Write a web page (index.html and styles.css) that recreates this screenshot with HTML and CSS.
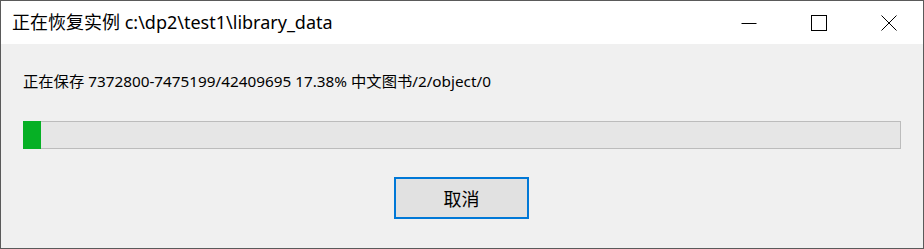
FILE: index.html
```html
<!DOCTYPE html>
<html lang="zh">
<head>
<meta charset="utf-8">
<link rel="stylesheet" href="styles.css">
</head>
<body>
<div class="window">
  <div class="titlebar">
    <div class="title">正在恢复实例 c:\dp2\test1\library_data</div>
    <div class="controls">
      <div class="ctl">
        <svg width="16" height="16" viewBox="0 0 16 16"><path d="M0.5 8.5H15.5" stroke="#000" stroke-width="1" fill="none"/></svg>
      </div>
      <div class="ctl">
        <svg width="16" height="16" viewBox="0 0 16 16"><rect x="0.5" y="0.5" width="15" height="15" stroke="#000" stroke-width="1" fill="none"/></svg>
      </div>
      <div class="ctl">
        <svg width="16" height="16" viewBox="0 0 16 16"><path d="M0.5 0.5L15.5 15.5M15.5 0.5L0.5 15.5" stroke="#000" stroke-width="1" fill="none"/></svg>
      </div>
    </div>
  </div>
  <div class="content">
    <div class="message">正在保存 7372800-7475199/42409695 17.38% 中文图书/2/object/0</div>
    <div class="progress"><div class="fill" style="width:18px"></div></div>
    <div class="actions"><button class="btn">取消</button></div>
  </div>
</div>
</body>
</html>
```
FILE: styles.css
```css
* { box-sizing: border-box; }
html, body { margin: 0; padding: 0; }
body {
  font-family: "Noto Sans", "Noto Sans CJK SC", sans-serif;
  background: #f0f0f0;
}
.window {
  width: 924px;
  height: 249px;
  border: 1px solid #5a5a5a;
  background: #f0f0f0;
  display: flex;
  flex-direction: column;
}
.titlebar {
  height: 43px;
  background: #fff;
  display: flex;
  align-items: center;
  justify-content: space-between;
}
.title {
  padding-left: 11px;
  font-size: 18px;
  color: #000;
  line-height: 1;
  margin-top: -2px;
}
.controls {
  display: flex;
  height: 100%;
  align-items: center;
  padding-right: 26px;
  gap: 54px;
}
.ctl {
  width: 16px;
  height: 16px;
  display: flex;
}
.ctl svg { display: block; }
.content {
  flex: 1;
  display: flex;
  flex-direction: column;
  padding: 0 22px 0 22px;
}
.message {
  margin-top: 26px;
  font-size: 15.3px;
  line-height: 22px;
  color: #000;
  height: 22px;
}
.progress {
  margin-top: 29px;
  height: 28px;
  border: 1px solid #bcbcbc;
  background: #e6e6e6;
  display: flex;
}
.fill {
  background: #06b025;
  margin: -1px 0 -1px -1px;
}
.actions {
  margin-top: 28px;
  display: flex;
  justify-content: center;
  padding-right: 1px;
}
.btn {
  width: 135px;
  height: 42px;
  border: 2px solid #0078d7;
  background: #e1e1e1;
  font-family: "Noto Sans CJK SC", sans-serif;
  font-size: 18px;
  color: #000;
  padding: 0;
  margin: 0;
}
```
